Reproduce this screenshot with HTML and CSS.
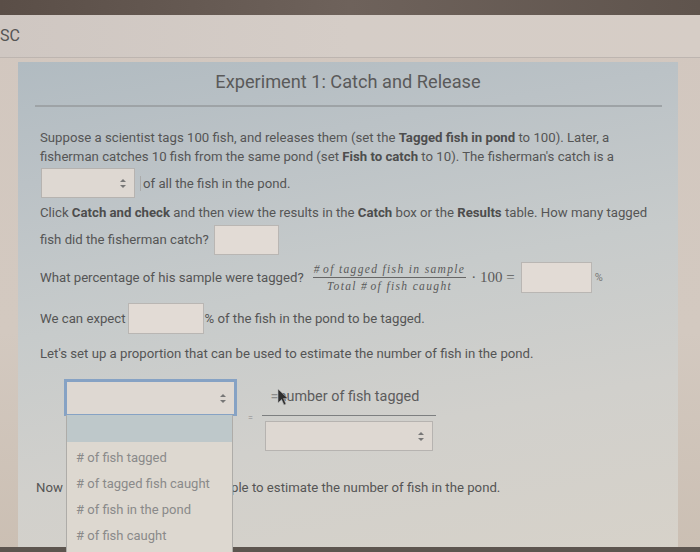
FILE: index.html
```html
<!DOCTYPE html>
<html>
<head>
<meta charset="utf-8">
<link rel="stylesheet" href="styles.css">
</head>
<body>
<div class="topbar"></div>
<div class="header"><span class="sc">SC</span></div>
<div class="stage">
  <div class="panel">
    <h1 class="title">Experiment 1: Catch and Release</h1>
    <div class="rule"></div>

    <div class="line l1">Suppose a scientist tags 100 fish, and releases them (set the <b>Tagged fish in pond</b> to 100). Later, a</div>
    <div class="line">fisherman catches 10 fish from the same pond (set <b>Fish to catch</b> to 10). The fisherman's catch is a</div>
    <div class="row r3">
      <div class="select sel-small"><span class="arrows"></span></div>
      <span class="after-sel">of all the fish in the pond.</span>
    </div>

    <div class="line l4">Click <b>Catch and check</b> and then view the results in the <b>Catch</b> box or the <b>Results</b> table. How many tagged</div>
    <div class="row r5">
      <span>fish did the fisherman catch?</span>
      <div class="input in-caught"></div>
    </div>

    <div class="row r6">
      <span>What percentage of his sample were tagged?</span>
      <span class="frac">
        <span class="num">#&#8202;of tagged fish in sample</span>
        <span class="den">Total #&#8202;of fish caught</span>
      </span>
      <span class="times">&middot; 100 =</span>
      <div class="input in-pct"></div>
      <span class="pct">%</span>
    </div>

    <div class="row r7">
      <span>We can expect</span>
      <div class="input in-expect"></div>
      <span class="pct2">% of the fish in the pond to be tagged.</span>
    </div>

    <div class="line l8">Let's set up a proportion that can be used to estimate the number of fish in the pond.</div>

    <div class="prop">
      <div class="prop-left">
        <div class="select sel-focus"><span class="arrows"></span></div>
        <div class="dropdown">
          <div class="opt opt-hl"></div>
          <div class="opt"># of fish tagged</div>
          <div class="opt"># of tagged fish caught</div>
          <div class="opt"># of fish in the pond</div>
          <div class="opt"># of fish caught</div>
        </div>
      </div>
      <span class="eq">=</span>
      <div class="prop-right">
        <div class="pnum"><span class="eqfaint">=<svg class="cursor" width="12" height="18" viewBox="0 0 12 18"><path d="M1 1 L1 15 L4.5 11.5 L7 17 L9 16 L6.6 10.6 L11 10.6 Z" fill="#2e2e2e" stroke="#bbb" stroke-width="0.6"/></svg></span>number of fish tagged</div>
        <div class="pline"></div>
        <div class="select sel-den"><span class="arrows"></span></div>
      </div>
    </div>

    <div class="row r9">
      <span class="now">Now</span>
      <span class="rest">ple to estimate the number of fish in the pond.</span>
    </div>
  </div>
</div>
<div class="bottombar"></div>
</body>
</html>
```

FILE: styles.css
```css
* { box-sizing: border-box; }
html, body { margin: 0; padding: 0; }
body {
  width: 700px;
  height: 552px;
  overflow: hidden;
  font-family: Roboto, "Liberation Sans", sans-serif;
  color: #555;
  background: linear-gradient(180deg, #d2c7bf 0%, #d3c9c0 60%, #cbbfb3 100%);
  position: relative;
}
.topbar {
  height: 15px;
  background: linear-gradient(90deg, #5a4e47 0%, #6e625b 50%, #5f544d 100%);
}
.header {
  height: 43px;
  background: linear-gradient(90deg, #cfc7c2 0%, #d5cdc7 50%, #d6cdc6 100%);
  border-bottom: 1px solid #bdb5b0;
  position: relative;
}
.sc {
  position: absolute;
  left: 0;
  top: 11px;
  font-size: 16px;
  color: #555;
}
.stage {
  padding: 4px 22px 0 18px;
}
.panel {
  width: 660px;
  height: 500px;
  padding: 0 0 0 22px;
  background: linear-gradient(170deg, #b1bbc1 0%, #bbc2c6 20%, #c7cbcb 45%, #d1d0cc 70%, #d7d2c9 100%);
  position: relative;
}
.title {
  margin: 0;
  padding-top: 9px;
  height: 43px;
  text-align: center;
  font-weight: 400;
  font-size: 18.2px;
  color: #5a5a5a;
  margin-left: -22px;
}
.rule {
  height: 2px;
  background: #9ea3a6;
  margin: 0 16px 0 -5px;
}
.line {
  font-size: 13.2px;
  line-height: 19px;
  white-space: nowrap;
}
b { font-weight: 700; color: #4d4d4d; }
.l1 { margin-top: 21px; }
.row {
  display: flex;
  align-items: center;
  font-size: 13.2px;
  white-space: nowrap;
}
.r3 { margin-top: 2px; height: 30px; }
.select {
  position: relative;
  background: #ded8d2;
  border: 1px solid #b6b3b0;
}
.arrows {
  position: absolute;
  top: 50%;
  right: 8px;
  width: 6px;
  height: 9px;
  margin-top: -4px;
}
.arrows::before, .arrows::after {
  content: "";
  position: absolute;
  left: 0;
  border-left: 3px solid transparent;
  border-right: 3px solid transparent;
}
.arrows::before { top: 0; border-bottom: 3.5px solid #777; }
.arrows::after { bottom: 0; border-top: 3.5px solid #777; }
.sel-small { width: 94px; height: 30px; margin-left: 1px; }
.after-sel { margin-left: 5px; border-left: 1px solid #aaa; padding-left: 2px; }
.l4 { margin-top: 5px; }
.r5 { margin-top: 2px; height: 31px; }
.input {
  background: #e2dbd5;
  border: 1px solid #b9b6b3;
}
.in-caught { width: 65px; height: 30px; margin-left: 5px; }
.r6 { margin-top: 7px; height: 31px; }
.frac {
  display: inline-flex;
  flex-direction: column;
  align-items: center;
  margin-left: 9px;
  font-family: "Liberation Serif", serif;
  font-style: italic;
  font-size: 11.5px;
  letter-spacing: 1.35px;
  color: #5a5a5a;
  line-height: 14px;
}
.num { border-bottom: 1px solid #666; padding: 0 1px 1px; }
.den { padding-top: 1px; }
.times {
  font-family: "Liberation Serif", serif;
  font-size: 15px;
  margin-left: 5px;
  color: #5a5a5a;
}
.in-pct { width: 71px; height: 31px; margin-left: 6px; }
.pct { font-size: 11px; color: #777; margin-left: 3px; }
.r7 { margin-top: 10px; height: 31px; }
.in-expect { width: 76px; height: 31px; margin-left: 2px; }
.pct2 { margin-left: 1px; }
.l8 { margin-top: 10px; }
.prop {
  display: flex;
  align-items: flex-start;
  margin-top: 16px;
  margin-left: 24px;
  height: 101px;
}
.prop-left { position: relative; width: 173px; }
.sel-focus {
  width: 173px;
  height: 37px;
  border: 3px solid #86a2c4;
  border-bottom-width: 2px;
}
.dropdown {
  position: absolute;
  left: 2px;
  top: 36px;
  width: 167px;
  background: #ddd8d0;
  border: 1px solid #aeaca8;
  border-top: none;
  z-index: 5;
  padding-bottom: 4px;
}
.opt {
  height: 26px;
  line-height: 26px;
  padding-left: 9px;
  font-size: 13px;
  color: #8a8a8a;
  white-space: nowrap;
}
.opt-hl { background: #bec8ca; height: 27px; margin-bottom: 3px; }
.eq {
  font-size: 9px;
  color: #888;
  margin: 34px 0 0 11px;
}
.prop-right { margin-left: 9px; width: 174px; padding-top: 9px; }
.pnum {
  font-size: 14.4px;
  text-align: center;
  color: #5c5c5c;
  height: 21px;
  padding-right: 8px;
}
.eqfaint { color: #8d8d8d; position: relative; }
.cursor { position: absolute; left: 6px; top: 0; }
.pline { height: 1px; background: #7d7f80; margin-top: 6px; }
.sel-den { width: 168px; height: 30px; margin: 5px 0 0 3px; }
.r9 { margin-top: 0; margin-left: -4px; font-size: 13.2px; }
.now { width: 195px; }
.bottombar {
  position: absolute;
  left: 0; right: 0; bottom: 0;
  height: 5px;
  background: #5d554f;
}
```
